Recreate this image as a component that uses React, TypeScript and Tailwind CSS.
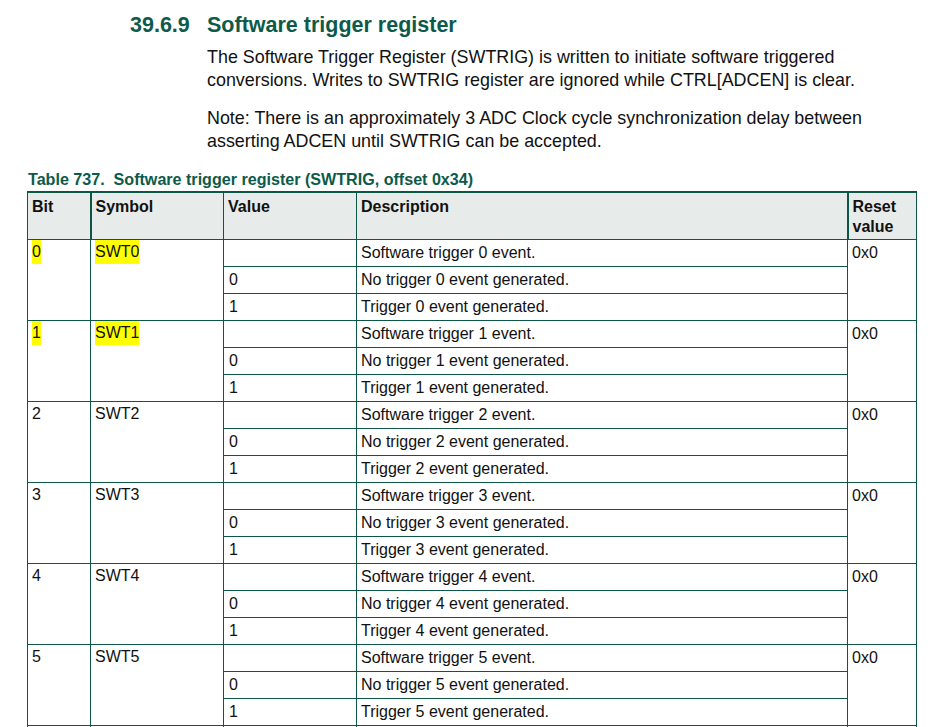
import React from "react";

const groups = [0, 1, 2, 3, 4, 5];

function Hl({ on, children }: { on: boolean; children: React.ReactNode }) {
  return on ? (
    <span className="inline-block bg-[#ffff00] leading-[24px]">{children}</span>
  ) : (
    <span className="inline-block leading-[24px]">{children}</span>
  );
}

export default function App() {
  const bd = "border border-[#0b5645]";
  return (
    <div className="w-[945px] h-[727px] overflow-hidden bg-white font-['Liberation_Sans',Arial,sans-serif] text-black">
      <div className="flex pt-[10px] text-[21.5px] font-bold text-[#0d5a4a] leading-[30px]">
        <span className="ml-[130px] w-[77px]">39.6.9</span>
        <span>Software trigger register</span>
      </div>
      <div className="ml-[207px] mt-[6px] text-[17.9px] leading-[23px] text-[#111]">
        <p>
          The Software Trigger Register (SWTRIG) is written to initiate software triggered
          <br />
          conversions. Writes to SWTRIG register are ignored while CTRL[ADCEN] is clear.
        </p>
        <p className="mt-[15px]">
          Note: There is an approximately 3 ADC Clock cycle synchronization delay between
          <br />
          asserting ADCEN until SWTRIG can be accepted.
        </p>
      </div>
      <div className="ml-[28px] mt-[16px] text-[16.1px] font-bold text-[#0d5a4a] leading-[20px] whitespace-pre">
        {"Table 737.  Software trigger register (SWTRIG, offset 0x34)"}
      </div>
      <table className="ml-[27px] mt-[2px] w-[889px] table-fixed border-collapse text-[16px] text-[#111]">
        <colgroup>
          <col className="w-[63px]" />
          <col className="w-[133px]" />
          <col className="w-[133px]" />
          <col className="w-[491px]" />
          <col className="w-[69px]" />
        </colgroup>
        <thead>
          <tr className="h-[47px] bg-[#e7ecea] font-bold text-left align-top leading-[20px]">
            <th className={`${bd} border-t-2 border-r-2 px-[4px] pt-[4px]`}>Bit</th>
            <th className={`${bd} border-t-2 px-[4px] pt-[4px]`}>Symbol</th>
            <th className={`${bd} border-t-2 px-[4px] pt-[4px]`}>Value</th>
            <th className={`${bd} border-t-2 border-r-2 px-[4px] pt-[4px]`}>Description</th>
            <th className={`${bd} border-t-2 px-[4px] pt-[4px]`}>
              Reset
              <br />
              value
            </th>
          </tr>
        </thead>
        <tbody>
          {groups.map((g) => (
            <React.Fragment key={g}>
              <tr className="h-[27px] align-top">
                <td rowSpan={3} className={`${bd} px-[4px]`}>
                  <Hl on={g < 2}>{g}</Hl>
                </td>
                <td rowSpan={3} className={`${bd} px-[4px]`}>
                  <Hl on={g < 2}>SWT{g}</Hl>
                </td>
                <td className={`${bd} px-[5px]`}></td>
                <td className={`${bd} px-[4px] leading-[26px]`}>Software trigger {g} event.</td>
                <td rowSpan={3} className={`${bd} px-[4px] leading-[26px]`}>0x0</td>
              </tr>
              <tr className="h-[27px] align-top">
                <td className={`${bd} px-[5px] leading-[26px]`}>0</td>
                <td className={`${bd} px-[4px] leading-[26px]`}>No trigger {g} event generated.</td>
              </tr>
              <tr className="h-[27px] align-top">
                <td className={`${bd} px-[5px] leading-[26px]`}>1</td>
                <td className={`${bd} px-[4px] leading-[26px]`}>Trigger {g} event generated.</td>
              </tr>
            </React.Fragment>
          ))}
          <tr className="h-[27px]">
            <td className={bd}></td>
            <td className={bd}></td>
            <td className={bd}></td>
            <td className={bd}></td>
            <td className={bd}></td>
          </tr>
        </tbody>
      </table>
    </div>
  );
}
